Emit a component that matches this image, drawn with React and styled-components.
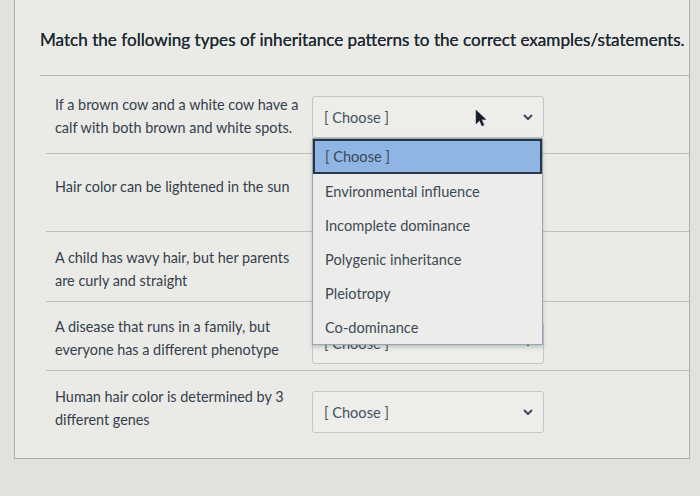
import React from 'react';
import styled, { createGlobalStyle } from 'styled-components';

const Global = createGlobalStyle`
  html, body { margin: 0; padding: 0; }
  body {
    background: #e1e2dd;
    font-family: Lato, "Open Sans", "Liberation Sans", sans-serif;
    color: #2d3b45;
  }
`;

const Page = styled.div`
  width: 700px;
  height: 496px;
  overflow: hidden;
  box-sizing: border-box;
  padding: 0 10px 0 14px;
`;

const Card = styled.section`
  height: 459px;
  box-sizing: border-box;
  background: #eaebe6;
  border: 1px solid #a9aeb5;
  border-top: none;
  padding-left: 25px;
  display: flex;
  flex-direction: column;
`;

const Title = styled.h2`
  margin: 0;
  padding-top: 29px;
  font-size: 17.1px;
  line-height: 22px;
  font-weight: 400;
  color: #1f2a33;
  white-space: nowrap;
  text-shadow: 0 0 0.4px #1f2a33;
`;

const Divider = styled.hr`
  margin: 24px 0 0;
  border: none;
  border-top: 1px solid #b3b8c0;
`;

const List = styled.div`
  padding-left: 6px;
  display: flex;
  flex-direction: column;
`;

const Row = styled.div`
  display: grid;
  grid-template-columns: 266px 232px;
  align-items: start;
  height: ${p => p.$h}px;
  box-sizing: border-box;
  border-bottom: ${p => (p.$last ? 'none' : '1px solid #b9bdc4')};
`;

const Prompt = styled.div`
  padding: ${p => p.$pt}px 8px 0 9px;
  font-size: 14.4px;
  line-height: 23px;
  color: #34404b;
`;

const SelectWrap = styled.div`
  position: relative;
  margin-top: ${p => p.$mt}px;
`;

/* Selects sitting under the open menu are drawn without content */
const SelectBox = styled.div`
  height: 42px;
  box-sizing: border-box;
  border: 1px solid #c3c7cc;
  border-radius: 3px;
  background: #edeeea;
  display: flex;
  align-items: center;
  justify-content: space-between;
  padding: 0 10px 0 11px;
  font-size: 14.6px;
  color: #45525f;
  visibility: ${p => (p.$covered ? 'hidden' : 'visible')};
`;

const Menu = styled.ul`
  position: absolute;
  top: 100%;
  left: 0;
  width: 229px;
  margin: 0;
  padding: 0;
  list-style: none;
  background: #ecedea;
  border: 1px solid #9ba3ae;
  box-shadow: 0 2px 4px rgba(40, 50, 60, 0.25);
  z-index: 5;
`;

const Option = styled.li`
  height: ${p => (p.$active ? 35 : 34)}px;
  box-sizing: border-box;
  display: flex;
  align-items: center;
  padding-left: ${p => (p.$active ? 10 : 12)}px;
  font-size: 14.6px;
  color: #3d4955;
  background: ${p => (p.$active ? '#8fb5e4' : 'transparent')};
  border: ${p => (p.$active ? '2px solid #283649' : 'none')};
`;

const Pointer = styled.svg`
  position: absolute;
  left: 163px;
  top: 13px;
`;

const Chevron = () => (
  <svg width="10" height="7" viewBox="0 0 10 7">
    <path d="M1.5 1.5 L5 5 L8.5 1.5" fill="none" stroke="#3e4b5d" strokeWidth="2" strokeLinecap="round" strokeLinejoin="round" />
  </svg>
);

const options = [
  'Environmental influence',
  'Incomplete dominance',
  'Polygenic inheritance',
  'Pleiotropy',
  'Co-dominance',
];

const rows = [
  { text: 'If a brown cow and a white cow have a calf with both brown and white spots.', h: 78, pt: 17, open: true },
  { text: 'Hair color can be lightened in the sun', h: 78, pt: 21, covered: true },
  { text: 'A child has wavy hair, but her parents are curly and straight', h: 70, pt: 14, covered: true },
  { text: 'A disease that runs in a family, but everyone has a different phenotype', h: 69, pt: 13 },
  { text: 'Human hair color is determined by 3 different genes', h: 86, pt: 14, last: true },
];

export default function App() {
  return (
    <>
      <Global />
      <Page>
        <Card>
          <Title>Match the following types of inheritance patterns to the correct examples/statements.</Title>
          <Divider />
          <List>
            {rows.map((r, i) => (
              <Row key={i} $h={r.h} $last={r.last}>
                <Prompt $pt={r.pt}>{r.text}</Prompt>
                <SelectWrap $mt={20}>
                  <SelectBox $covered={r.covered}>
                    <span>[ Choose ]</span>
                    <Chevron />
                  </SelectBox>
                  {r.open && (
                    <>
                      <Pointer width="12" height="18" viewBox="0 0 12 18">
                        <path d="M1 1 L1 15 L4.5 11.5 L7 17 L9 16 L6.6 10.6 L11 10.6 Z" fill="#151a22" stroke="#3a4660" strokeWidth="0.6" />
                      </Pointer>
                      <Menu>
                        <Option $active>[ Choose ]</Option>
                        {options.map(o => (
                          <Option key={o}>{o}</Option>
                        ))}
                      </Menu>
                    </>
                  )}
                </SelectWrap>
              </Row>
            ))}
          </List>
        </Card>
      </Page>
    </>
  );
}
